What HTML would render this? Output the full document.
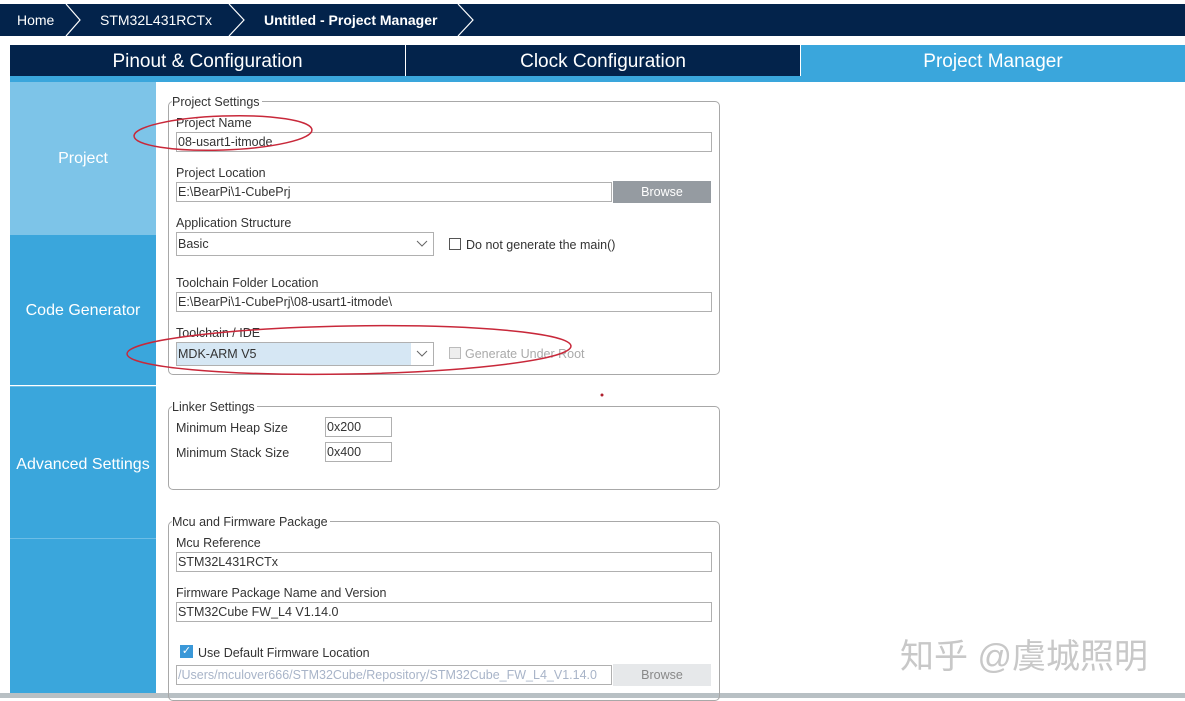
<!DOCTYPE html>
<html><head><meta charset="utf-8"><style>
*{margin:0;padding:0;box-sizing:border-box}
body{width:1185px;height:698px;position:relative;overflow:hidden;background:#fff;font-family:"Liberation Sans",Arial,sans-serif;color:#333}
.a{position:absolute}
.bc{left:0;top:4px;width:1185px;height:32px;background:#03234b;color:#fff;font-size:14px}
.bc span{position:absolute;top:8px}
.tab{top:45px;height:31px;background:#03234b;color:#fff;font-size:19px;text-align:center;line-height:33px}
.lbl{font-size:12.5px;color:#333;margin-top:1px}
.in{border:1px solid #b0b0b0;height:20px;font-size:12.5px;line-height:19px;padding-left:1px;color:#333;background:#fff}
.grp{border:1px solid #a8a8a8;border-radius:5px}
.lg{font-size:12.5px;background:#fff;padding-right:2px;color:#333;margin-top:1px}
.btn{background:#959ba1;color:#fff;font-size:12.5px;text-align:center;line-height:22px;height:22px}
.side{left:10px;width:146px;color:#fff;font-size:16px;text-align:center}
</style></head><body>
<div class="a bc">
<span style="left:17px">Home</span>
<span style="left:100px">STM32L431RCTx</span>
<span style="left:264px;font-weight:bold">Untitled - Project Manager</span>
<svg class="a" style="left:0;top:0" width="500" height="32"><g fill="none" stroke="#fff" stroke-width="1.2"><path d="M66 0 L80 16 L66 32"/><path d="M229 0 L244 16 L229 32"/><path d="M458 0 L473 16 L458 32"/></g></svg>
</div>
<div class="a tab" style="left:10px;width:395px">Pinout &amp; Configuration</div>
<div class="a tab" style="left:406px;width:394px">Clock Configuration</div>
<div class="a tab" style="left:801px;width:384px;background:#3aa6dc">Project Manager</div>
<div class="a" style="left:10px;top:76px;width:1175px;height:6px;background:#3aa6dc"></div>
<div class="a side" style="top:82px;height:153px;background:#7dc4e8;line-height:153px">Project</div>
<div class="a side" style="top:235px;height:150px;background:#3aa6dc;line-height:152px">Code Generator</div>
<div class="a side" style="top:386px;height:152px;background:#3aa6dc;line-height:156px;border-top:1px solid #6cbde6">Advanced Settings</div>
<div class="a side" style="top:538px;height:156px;background:#3aa6dc;border-top:1px solid #6cbde6"></div>
<div class="a" style="left:0;top:693px;width:1185px;height:5px;background:#b8c0c4"></div>

<div class="a grp" style="left:168px;top:101px;width:552px;height:274px"></div>
<div class="a lg" style="left:172px;top:94px">Project Settings</div>
<div class="a lbl" style="left:176px;top:115px">Project Name</div>
<div class="a in" style="left:176px;top:132px;width:536px">08-usart1-itmode</div>
<div class="a lbl" style="left:176px;top:165px">Project Location</div>
<div class="a in" style="left:176px;top:182px;width:436px">E:\BearPi\1-CubePrj</div>
<div class="a btn" style="left:613px;top:181px;width:98px">Browse</div>
<div class="a lbl" style="left:176px;top:215px">Application Structure</div>
<div class="a in" style="left:176px;top:232px;width:258px;height:24px;line-height:23px">Basic</div>
<svg class="a" style="left:416px;top:240px" width="12" height="8"><path d="M1 1 L6 6 L11 1" fill="none" stroke="#666"/></svg>
<div class="a" style="left:449px;top:238px;width:12px;height:12px;border:1px solid #555"></div>
<div class="a lbl" style="left:466px;top:237px">Do not generate the main()</div>
<div class="a lbl" style="left:176px;top:275px">Toolchain Folder Location</div>
<div class="a in" style="left:176px;top:292px;width:536px">E:\BearPi\1-CubePrj\08-usart1-itmode\</div>
<div class="a lbl" style="left:176px;top:325px">Toolchain / IDE</div>
<div class="a in" style="left:176px;top:342px;width:258px;height:24px;line-height:23px;background:linear-gradient(90deg,#d6e7f4 234px,#fff 234px)">MDK-ARM V5</div>
<svg class="a" style="left:416px;top:350px" width="12" height="8"><path d="M1 1 L6 6 L11 1" fill="none" stroke="#666"/></svg>
<div class="a" style="left:449px;top:347px;width:12px;height:12px;border:1px solid #bbb;background:#eee"></div>
<div class="a lbl" style="left:465px;top:346px;color:#aaa">Generate Under Root</div>

<div class="a grp" style="left:168px;top:406px;width:552px;height:84px"></div>
<div class="a lg" style="left:172px;top:399px">Linker Settings</div>
<div class="a lbl" style="left:176px;top:420px">Minimum Heap Size</div>
<div class="a in" style="left:325px;top:417px;width:67px">0x200</div>
<div class="a lbl" style="left:176px;top:445px">Minimum Stack Size</div>
<div class="a in" style="left:325px;top:442px;width:67px">0x400</div>

<div class="a grp" style="left:168px;top:521px;width:552px;height:180px"></div>
<div class="a lg" style="left:172px;top:514px">Mcu and Firmware Package</div>
<div class="a lbl" style="left:176px;top:535px">Mcu Reference</div>
<div class="a in" style="left:176px;top:552px;width:536px">STM32L431RCTx</div>
<div class="a lbl" style="left:176px;top:585px">Firmware Package Name and Version</div>
<div class="a in" style="left:176px;top:602px;width:536px">STM32Cube FW_L4 V1.14.0</div>
<div class="a" style="left:180px;top:645px;width:13px;height:13px;background:#3a98d8;color:#fff;font-size:11px;line-height:13px;text-align:center">✓</div>
<div class="a lbl" style="left:198px;top:645px">Use Default Firmware Location</div>
<div class="a in" style="left:176px;top:665px;width:436px;color:#a8b4c8;overflow:hidden;white-space:nowrap">/Users/mculover666/STM32Cube/Repository/STM32Cube_FW_L4_V1.14.0</div>
<div class="a btn" style="left:613px;top:664px;width:98px;background:#e6e8ea;color:#888">Browse</div>

<svg class="a" style="left:0;top:0" width="1185" height="698"><g fill="none" stroke="#c8283a" stroke-width="1.5">
<ellipse cx="223" cy="133" rx="89" ry="17" transform="rotate(-2 223 133)"/>
<ellipse cx="349" cy="350" rx="222" ry="24" transform="rotate(-1 349 350)"/></g>
<circle cx="602" cy="395" r="1.5" fill="#b0202e"/></svg>
<div class="a" style="left:900px;top:629px;font-size:34px;color:#c8c8c8;font-family:'Liberation Sans','Noto Sans CJK SC',sans-serif;letter-spacing:0px">知乎 @虞城照明</div>
</body></html>
